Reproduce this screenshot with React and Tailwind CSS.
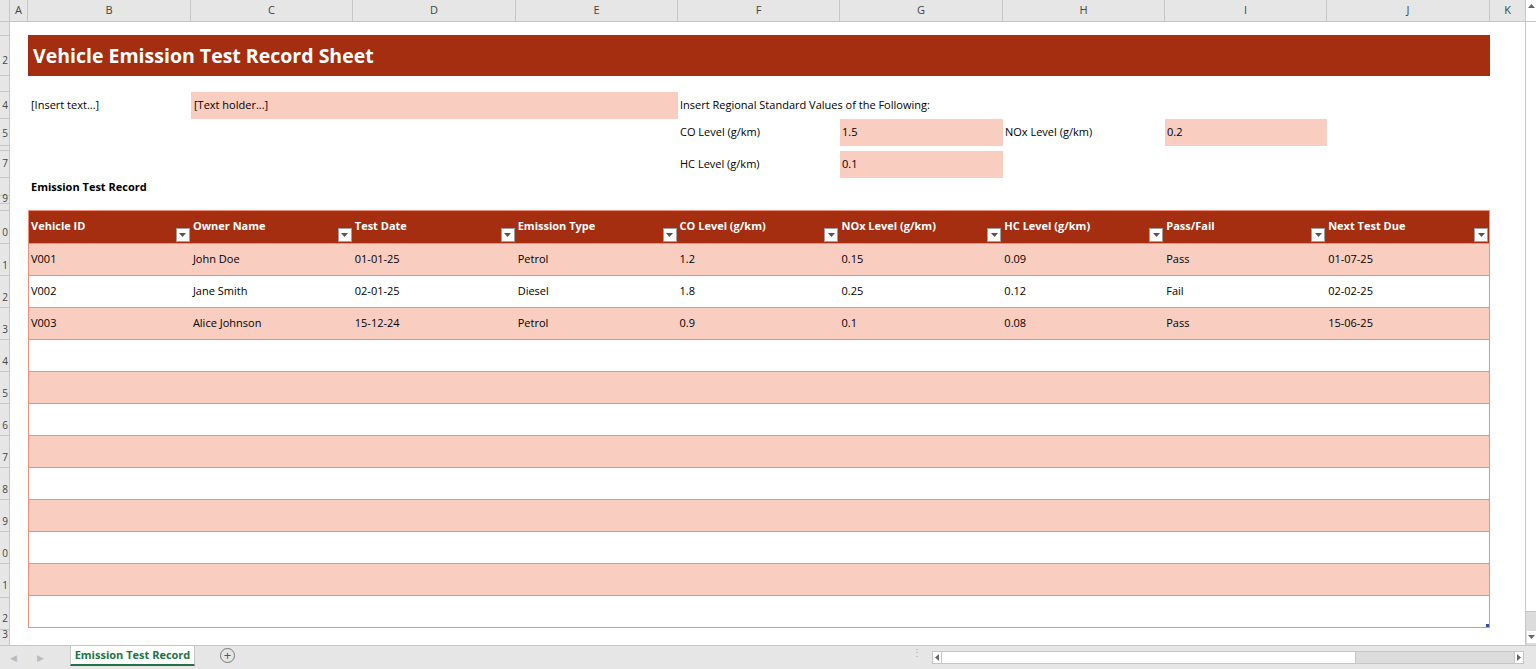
const W = [163, 162, 163, 162, 162, 163, 162, 162, 163];
const letters = ["B","C","D","E","F","G","H","I","J"];
const F = { fontFamily: '"Open Sans","Liberation Sans",sans-serif' };

function Caret() {
  return (
    <span className="absolute right-[1px] bottom-[1px] w-[14px] h-[14px] bg-white border border-[#a0a0a0] flex items-center justify-center">
      <svg width="7" height="4" viewBox="0 0 7 4"><path d="M0 0h7L3.5 4z" fill="#555" /></svg>
    </span>
  );
}

const headers = ["Vehicle ID","Owner Name","Test Date","Emission Type","CO Level (g/km)","NOx Level (g/km)","HC Level (g/km)","Pass/Fail","Next Test Due"];
const data = [
  ["V001","John Doe","01-01-25","Petrol","1.2","0.15","0.09","Pass","01-07-25"],
  ["V002","Jane Smith","02-01-25","Diesel","1.8","0.25","0.12","Fail","02-02-25"],
  ["V003","Alice Johnson","15-12-24","Petrol","0.9","0.1","0.08","Pass","15-06-25"],
];
const lines = [35,75,91,118,145,150,177,195,203,210,243,275,307,339,371,403,435,467,499,531,563,597,629];
const labels = [[60,"2"],[105,"4"],[133,"5"],[163,"7"],[198,"9"],[232,"0"],[265,"1"],[297,"2"],[329,"3"],[361,"4"],[393,"5"],[425,"6"],[457,"7"],[489,"8"],[521,"9"],[553,"0"],[585,"1"],[618,"2"],[634,"3"]];

export default function App() {
  const rows = [...data, ...Array(9).fill(null)];
  return (
    <div className="w-[1536px] h-[669px] bg-white relative overflow-hidden text-[11px] text-black" style={F}>
      <div className="flex h-[22px] bg-[#e6e6e6] border-b border-[#c6c6c6] text-[#444] text-[11px]">
        <div className="w-[10px] border-r border-[#c6c6c6]" />
        <div className="w-[18px] border-r border-[#c6c6c6] flex items-center justify-center">A</div>
        {letters.map((l, i) => (
          <div key={l} style={{ width: W[i] }} className="border-r border-[#c6c6c6] flex items-center justify-center">{l}</div>
        ))}
        <div className="w-[35px] flex items-center justify-center">K</div>
        <div className="flex-1 bg-white border-l border-[#c6c6c6] flex items-start justify-center pt-1">
          <svg width="7" height="4" viewBox="0 0 7 4"><path d="M3.5 0L7 4H0z" fill="#666" /></svg>
        </div>
      </div>
      <div className="absolute left-0 top-[22px] w-[10px] h-[623px] bg-[#e6e6e6] border-r border-[#c6c6c6] overflow-hidden">
        {lines.map((y) => (
          <div key={y} className="absolute left-0 w-[10px] h-px bg-[#c6c6c6]" style={{ top: y - 22 }} />
        ))}
        {labels.map(([y, n], i) => (
          <div key={i} className="absolute right-[1px] text-[10px] leading-none text-[#444]" style={{ top: y - 22 - 5 }}>{n}</div>
        ))}
      </div>
      <div className="absolute right-0 top-[22px] w-[11px] h-[623px] bg-[#dcdcdc] border-l border-[#c6c6c6]">
        <div className="h-[590px] bg-white border-b border-[#c6c6c6]" />
        <div className="absolute bottom-[2px] left-[1px] w-[9px] h-[12px] bg-white flex items-center justify-center">
          <svg width="7" height="4" viewBox="0 0 7 4"><path d="M0 0h7L3.5 4z" fill="#666" /></svg>
        </div>
      </div>

      <div className="ml-[28px] w-[1462px]">
        <div className="mt-[13px] h-[41px] bg-[#a52e10] flex items-center pl-[5px] text-white text-[19.5px] font-bold">Vehicle Emission Test Record Sheet</div>
        <div className="flex mt-[16px] h-[27px]">
          <div className="w-[163px] flex items-center pl-[3px]">[Insert text...]</div>
          <div className="w-[487px] bg-[#f9cdc0] flex items-center pl-[3px]">[Text holder...]</div>
          <div className="flex items-center pl-[2px]">Insert Regional Standard Values of the Following:</div>
        </div>
        <div className="flex h-[27px]">
          <div className="w-[650px]" />
          <div className="w-[162px] flex items-center pl-[2px]">CO Level (g/km)</div>
          <div className="w-[163px] bg-[#f9cdc0] flex items-center pl-[2px]">1.5</div>
          <div className="w-[162px] flex items-center pl-[2px]">NOx Level (g/km)</div>
          <div className="w-[162px] bg-[#f9cdc0] flex items-center pl-[2px]">0.2</div>
        </div>
        <div className="flex h-[27px] mt-[5px]">
          <div className="w-[650px]" />
          <div className="w-[162px] flex items-center pl-[2px]">HC Level (g/km)</div>
          <div className="w-[163px] bg-[#f9cdc0] flex items-center pl-[2px]">0.1</div>
        </div>
        <div className="h-[18px] font-bold pl-[3px] flex items-center">Emission Test Record</div>
        <div className="mt-[14px] border border-[#f0907a] relative">
          <div className="flex h-[32px] bg-[#a52e10] text-white font-bold">
            {headers.map((h, i) => (
              <div key={h} style={{ width: W[i] - (i === 0 ? 1 : 0) }} className="relative pl-[2px] pt-[7px]">{h}<Caret /></div>
            ))}
          </div>
          {rows.map((r, ri) => (
            <div key={ri} className={`flex h-[32px] border-t border-[#f0907a] ${ri % 2 === 0 ? "bg-[#f9cdc0]" : "bg-white"}`}>
              {r && r.map((c, ci) => (
                <div key={ci} style={{ width: W[ci] - (ci === 0 ? 1 : 0) }} className="pl-[2px] flex items-center">{c}</div>
              ))}
            </div>
          ))}
          <div className="absolute right-0 bottom-0 w-[3px] h-[3px] bg-[#3050a0]" />
        </div>
      </div>

      <div className="absolute left-0 top-[645px] w-full h-[24px] bg-[#e6e6e6] border-t border-[#c6c6c6] flex items-start">
        <div className="w-[70px] flex gap-[20px] pl-[10px] pt-[5px] text-[#bbb] text-[9px]"><span>◀</span><span>▶</span></div>
        <div className="w-[125px] h-[20px] bg-white border-x border-[#c6c6c6] border-b-2 border-b-[#217346] flex items-center justify-center text-[#217346] font-bold text-[11px]">Emission Test Record</div>
        <div className="ml-[25px] mt-[2px] w-[15px] h-[15px] rounded-full border border-[#777] flex items-center justify-center text-[#555] text-[13px] leading-none">+</div>
        <div className="ml-[677px] mt-[4px] text-[#aaa] text-[10px] leading-[4px]">⋮</div>
        <div className="ml-[10px] mt-[5px] w-[592px] h-[13px] border border-[#c6c6c6] bg-[#dcdcdc] flex">
          <div className="w-[9px] bg-white border-r border-[#c6c6c6] flex items-center justify-center"><svg width="4" height="7" viewBox="0 0 4 7"><path d="M4 0v7L0 3.5z" fill="#666" /></svg></div>
          <div className="w-[414px] bg-white border-r border-[#c6c6c6]" />
          <div className="flex-1" />
          <div className="w-[9px] bg-white border-l border-[#c6c6c6] flex items-center justify-center"><svg width="4" height="7" viewBox="0 0 4 7"><path d="M0 0v7L4 3.5z" fill="#666" /></svg></div>
        </div>
      </div>
    </div>
  );
}
